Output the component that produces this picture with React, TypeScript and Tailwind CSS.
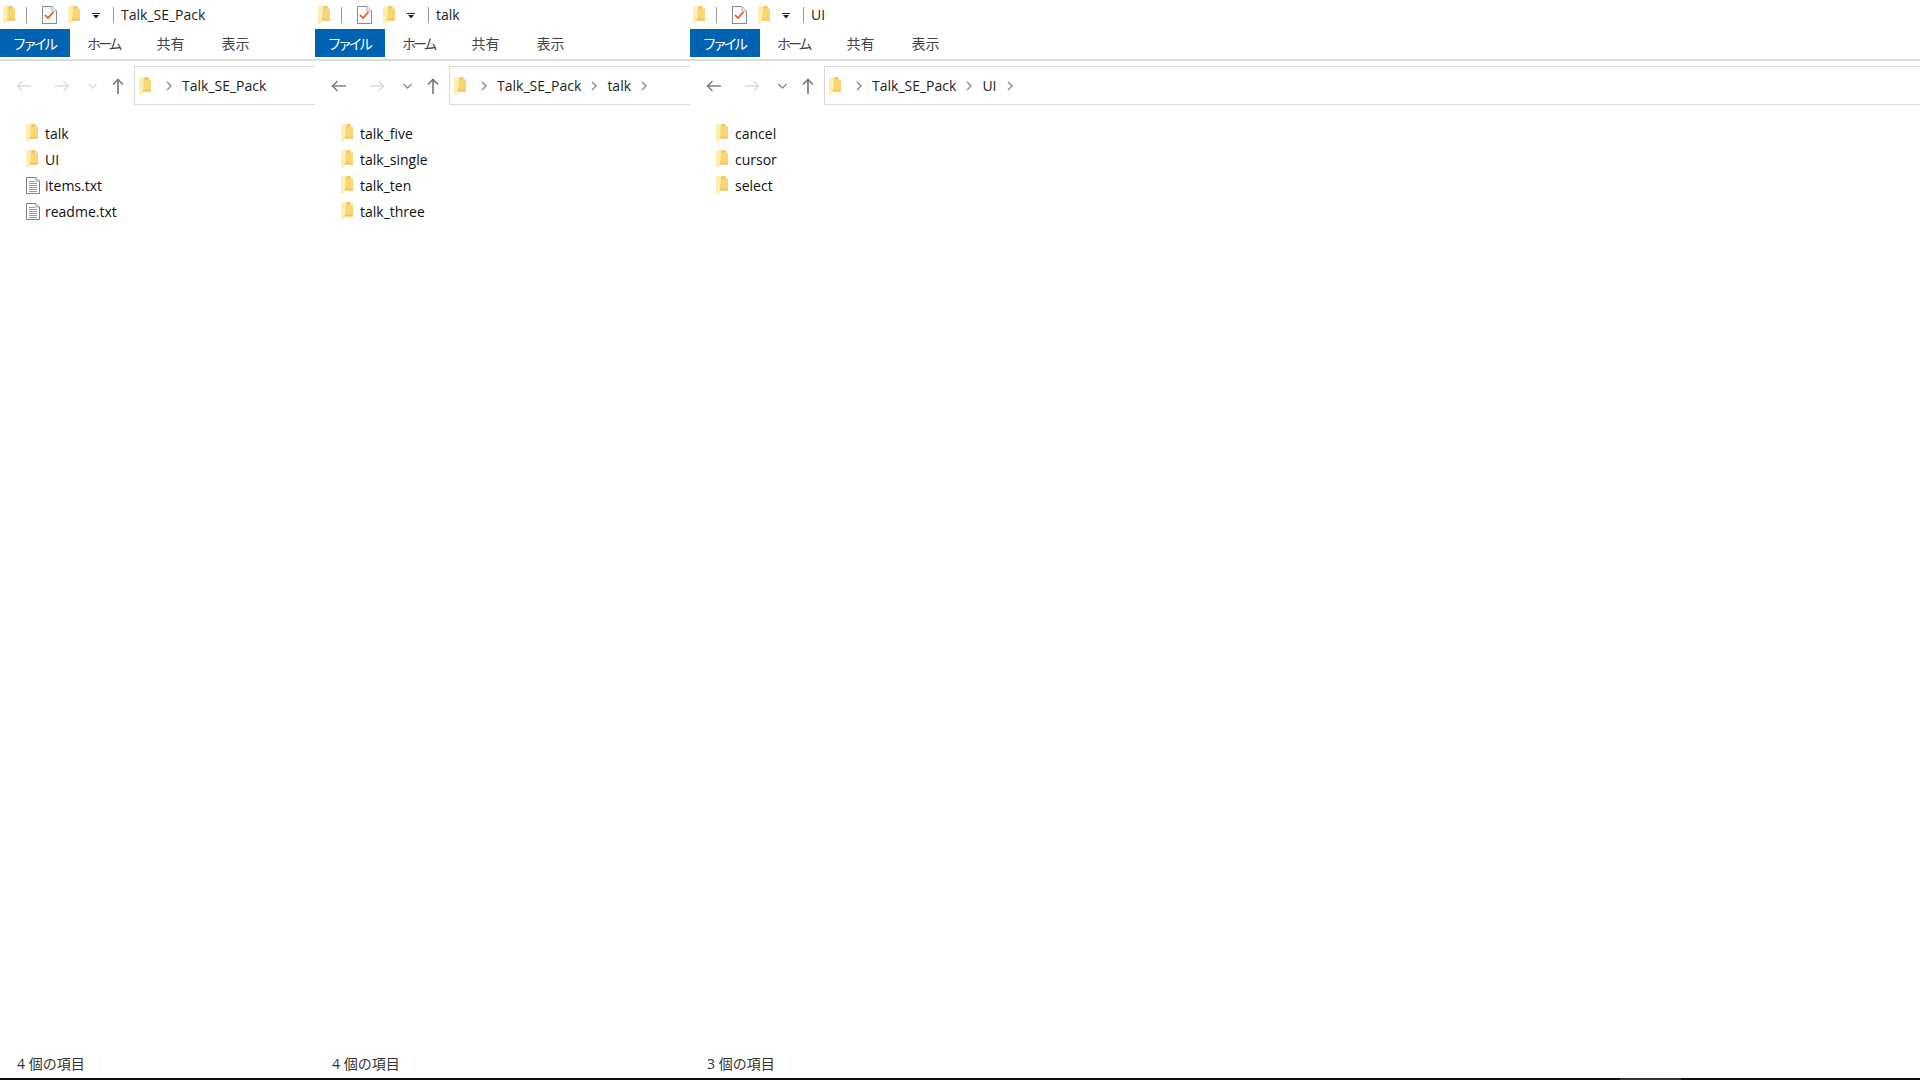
const FONT = "font-['Open_Sans','Noto_Sans_CJK_JP',sans-serif]";

function Folder({ className = "" }: { className?: string }) {
  return (
    <svg viewBox="0 0 12 18" className={className} aria-hidden="true">
      <path d="M0 0.8 L9.5 0.3 L9.5 2.5 L12 2.5 L12 14.5 L3.5 14.5 L3.5 16.5 L1.2 17.6 L0 16.5 Z" fill="#f8d672" />
      <path d="M0 0.8 L5 0.5 L4 14 L3.5 14.5 L3.5 16.5 L1.2 17.6 L0 16.5 Z" fill="#fdeeb4" />
      <path d="M5 0.5 L9.5 0.3 L9.5 2.5 L6 2.5 Z" fill="#efc35a" />
      <path d="M3.5 14.5 L12 14.5 L12 12.8 L4 12.8 Z" fill="#eec25c" />
    </svg>
  );
}

function CheckDoc() {
  return (
    <svg viewBox="0 0 15 18" className="w-[15px] h-[18px]" aria-hidden="true">
      <path d="M0.5 0.5 H10 L14.5 5 V17.5 H0.5 Z" fill="#fafafa" stroke="#8a8a8a" />
      <path d="M10 0.5 V5 H14.5" fill="#ececec" stroke="#b0b0b0" />
      <path d="M3 9 L6 12 L11.5 6" fill="none" stroke="#e2561f" strokeWidth="1.6" />
    </svg>
  );
}

function TextDoc() {
  return (
    <svg viewBox="0 0 14 17" className="w-[14px] h-[17px]" aria-hidden="true">
      <path d="M0.5 0.5 H10 L13.5 4 V16.5 H0.5 Z" fill="#fcfcfc" stroke="#808080" />
      <path d="M10 0.5 V4 H13.5" fill="#e4e4e4" stroke="#a0a0a0" />
      <path d="M3 4.5 H9 M3 6.5 H11 M3 8.5 H11 M3 10.5 H11 M3 12.5 H11 M3 14.5 H11" stroke="#999999" strokeWidth="1" />
    </svg>
  );
}

function ArrowLeft({ color }: { color: string }) {
  return (
    <svg viewBox="0 0 15 12" className="w-[15px] h-[12px]" aria-hidden="true">
      <path d="M15 6 H1.5 M6.5 1 L1.5 6 L6.5 11" fill="none" stroke={color} strokeWidth="1.6" />
    </svg>
  );
}

function ArrowRight() {
  return (
    <svg viewBox="0 0 15 12" className="w-[15px] h-[12px]" aria-hidden="true">
      <path d="M0 6 H13.5 M8.5 1 L13.5 6 L8.5 11" fill="none" stroke="#dcdcdc" strokeWidth="1.6" />
    </svg>
  );
}

function ArrowUp() {
  return (
    <svg viewBox="0 0 12 16" className="w-[12px] h-[16px]" aria-hidden="true">
      <path d="M6 16 V1.5 M1 6.5 L6 1.5 L11 6.5" fill="none" stroke="#7b7b7b" strokeWidth="1.7" />
    </svg>
  );
}

function ChevronDown({ color }: { color: string }) {
  return (
    <svg viewBox="0 0 9 6" className="w-[9px] h-[6px]" aria-hidden="true">
      <path d="M0.5 1 L4.5 5 L8.5 1" fill="none" stroke={color} strokeWidth="1.4" />
    </svg>
  );
}

function Crumb() {
  return (
    <svg viewBox="0 0 6 10" className="w-[6px] h-[10px] shrink-0" aria-hidden="true">
      <path d="M1 1 L5 5 L1 9" fill="none" stroke="#8a8a8a" strokeWidth="1.4" />
    </svg>
  );
}

function Dropdown() {
  return (
    <svg viewBox="0 0 8 6" className="w-[8px] h-[6px]" aria-hidden="true">
      <path d="M0 0.5 H8" stroke="#222" strokeWidth="1" />
      <path d="M1 2 H7 L4 5.5 Z" fill="#222" />
    </svg>
  );
}

type Item = { name: string; kind: "folder" | "text" };

type Win = {
  title: string;
  width: string;
  crumbs: string[];
  active: boolean;
  items: Item[];
  status: string;
};

const windows: Win[] = [
  {
    title: "Talk_SE_Pack",
    width: "w-[315px]",
    crumbs: ["Talk_SE_Pack"],
    active: false,
    items: [
      { name: "talk", kind: "folder" },
      { name: "UI", kind: "folder" },
      { name: "items.txt", kind: "text" },
      { name: "readme.txt", kind: "text" },
    ],
    status: "4 個の項目",
  },
  {
    title: "talk",
    width: "w-[375px]",
    crumbs: ["Talk_SE_Pack", "talk", ""],
    active: true,
    items: [
      { name: "talk_five", kind: "folder" },
      { name: "talk_single", kind: "folder" },
      { name: "talk_ten", kind: "folder" },
      { name: "talk_three", kind: "folder" },
    ],
    status: "4 個の項目",
  },
  {
    title: "UI",
    width: "flex-1",
    crumbs: ["Talk_SE_Pack", "UI", ""],
    active: true,
    items: [
      { name: "cancel", kind: "folder" },
      { name: "cursor", kind: "folder" },
      { name: "select", kind: "folder" },
    ],
    status: "3 個の項目",
  },
];

function Window({ w }: { w: Win }) {
  return (
    <div className={`${w.width} flex flex-col min-w-0 overflow-hidden`}>
      <div className="h-[29px] flex items-center pl-[3px] shrink-0">
        <Folder className="w-[12px] h-[18px]" />
        <div className="w-px h-[16px] bg-[#9a9a9a] ml-[11px]" />
        <div className="ml-[15px]"><CheckDoc /></div>
        <Folder className="w-[12px] h-[18px] ml-[11px]" />
        <div className="ml-[12px] mt-[2px] flex"><Dropdown /></div>
        <div className="w-px h-[16px] bg-[#9a9a9a] ml-[13px]" />
        <span className="ml-[7px] text-[14px] leading-none text-[#222]">{w.title}</span>
      </div>
      <div className="h-[32px] border-b-2 border-[#dcdcdc] flex items-start shrink-0">
        <div className="w-[70px] h-[28px] bg-[#0063b1] text-white text-[14px] tracking-[-3.5px] pr-[3px] flex items-center justify-center">ファイル</div>
        <span className="ml-[17px] h-[28px] flex items-center text-[14px] tracking-[-3px] text-[#444]">ホーム</span>
        <span className="ml-[37px] h-[28px] flex items-center text-[14px] text-[#444]">共有</span>
        <span className="ml-[37px] h-[28px] flex items-center text-[14px] text-[#444]">表示</span>
      </div>
      <div className="h-[39px] mt-[5px] flex items-center shrink-0">
        <div className="ml-[16px] flex"><ArrowLeft color={w.active ? "#808080" : "#dcdcdc"} /></div>
        <div className="ml-[24px] flex"><ArrowRight /></div>
        <div className="ml-[18px] flex"><ChevronDown color={w.active ? "#8a8a8a" : "#dcdcdc"} /></div>
        <div className="ml-[15px] flex"><ArrowUp /></div>
        <div className="ml-[10px] flex-1 h-[39px] border border-r-0 border-[#d9d9d9] flex items-center pl-[4px] min-w-0">
          <Folder className="w-[12px] h-[18px] shrink-0" />
          <div className="ml-[15px]"><Crumb /></div>
          {w.crumbs.map((c, i) =>
            c === "" ? null : (
              <div key={i} className="flex items-center">
                <span className="ml-[10px] text-[14px] text-[#222] whitespace-nowrap">{c}</span>
                {i < w.crumbs.length - 1 && <div className="ml-[10px]"><Crumb /></div>}
              </div>
            )
          )}
        </div>
      </div>
      <div className="flex-1 pt-[15px] flex flex-col">
        {w.items.map((it) => (
          <div key={it.name} className="h-[26px] flex items-center">
            <div className={`w-[45px] flex justify-end shrink-0 ${it.kind === "folder" ? "pr-[7px]" : "pr-[5px]"}`}>
              {it.kind === "folder" ? <Folder className="w-[12px] h-[18px]" /> : <TextDoc />}
            </div>
            <span className="text-[14px] text-[#111]">{it.name}</span>
          </div>
        ))}
      </div>
      <div className="h-[28px] flex items-center shrink-0 pl-[17px] pb-[2px]">
        <span className="text-[14px] text-[#333]">{w.status}</span>
        <div className="w-px h-[18px] bg-[#f8f8f8] ml-[14px]" />
      </div>
    </div>
  );
}

export default function App() {
  return (
    <div className={`${FONT} w-[1920px] h-[1080px] bg-white flex flex-col overflow-hidden`}>
      <div className="flex-1 flex min-h-0">
        {windows.map((w) => (
          <Window key={w.crumbs.join("/")} w={w} />
        ))}
      </div>
      <div className="h-[2px] bg-[#101010] flex shrink-0">
        <div className="w-[1620px]" />
        <div className="w-[61px] bg-[#333333]" />
      </div>
    </div>
  );
}
